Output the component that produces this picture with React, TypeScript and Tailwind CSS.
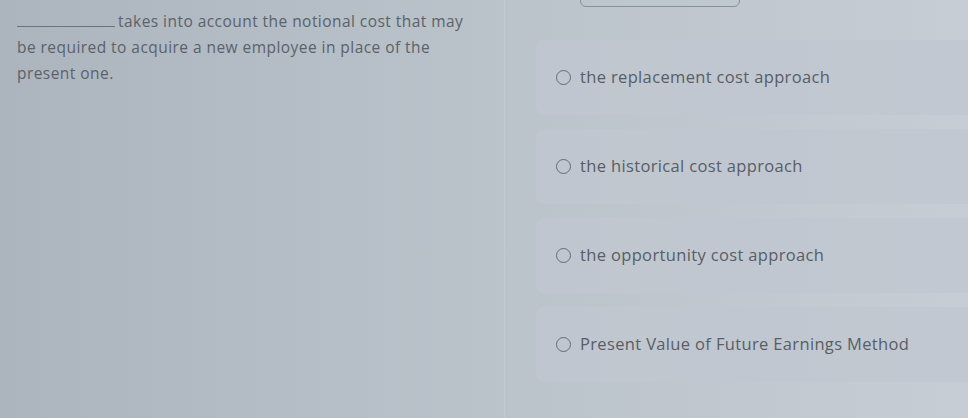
import React from "react";

const options = [
    "the replacement cost approach",
    "the historical cost approach",
    "the opportunity cost approach",
    "Present Value of Future Earnings Method",
];

export default function App() {
    return (
        <div
            className="w-[968px] h-[418px] overflow-hidden flex bg-linear-to-r from-[#acb5be] via-[#bac2ca] to-[#c6cdd5] text-[#5b626a]"
            style={{ fontFamily: '"Open Sans", "Liberation Sans", sans-serif' }}
        >
            {/* Question */}
            <div className="w-[505px] shrink-0 pl-[17px] pt-[8px] pr-[30px] border-r border-[#c2c9d0]">
                <p className="text-[15.5px] leading-[26px] tracking-[0.45px]">
                    <span className="inline-block w-[98px] border-b border-[#6b727a] align-baseline mr-[3px]" />
                    takes into account the notional cost that may be required to acquire a new employee in place of the present one.
                </p>
            </div>

            {/* Options */}
            <div className="flex-1 pl-[31px] flex flex-col">
                <div className="ml-[44px] w-[160px] h-[40px] -mt-[33px] border border-[#86919b] rounded-md" />
                <div className="mt-[33px] flex flex-col gap-[14px]">
                    {options.map((o) => (
                        <div
                            key={o}
                            className="h-[75px] -mr-4 rounded-lg bg-[#c0c7cf]/80 flex items-center pl-[20px] gap-[9px]"
                        >
                            <span className="w-[15px] h-[15px] rounded-full border-[1.5px] border-[#646b73] shrink-0" />
                            <span className="text-[16.5px] tracking-[0.35px] text-[#575e66]">{o}</span>
                        </div>
                    ))}
                </div>
            </div>
        </div>
    );
}
